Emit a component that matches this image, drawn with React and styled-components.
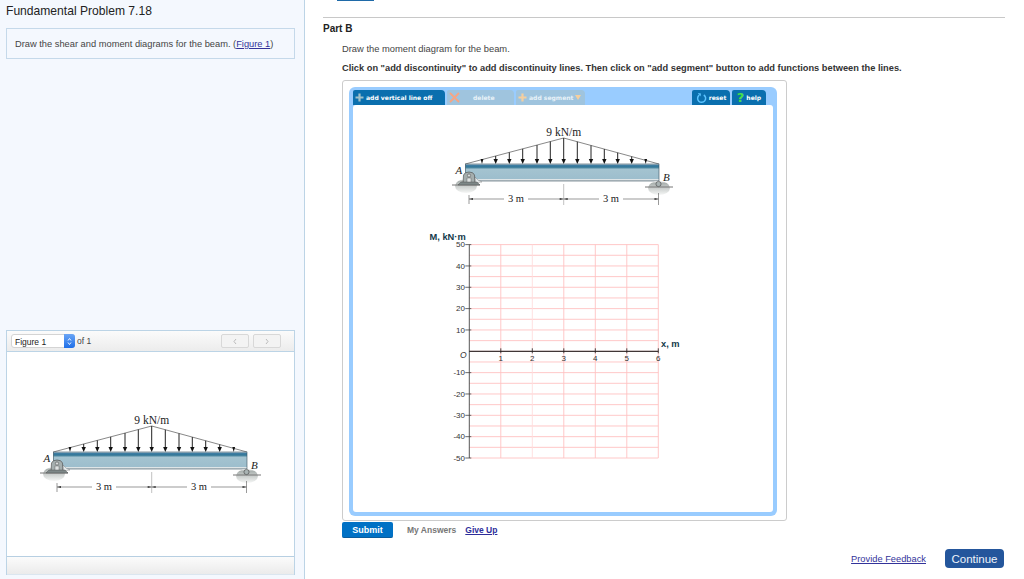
import React from 'react';
import styled, { createGlobalStyle } from 'styled-components';

const GlobalStyle = createGlobalStyle`
  html, body {
    margin: 0;
    padding: 0;
    background: #fff;
  }
  body {
    font-family: "Liberation Sans", Arial, sans-serif;
    color: #333;
  }
`;

const Page = styled.div`
  display: flex;
  width: 1024px;
  height: 579px;
  overflow: hidden;
`;

const Sidebar = styled.aside`
  display: flex;
  flex-direction: column;
  box-sizing: border-box;
  width: 305px;
  padding: 0 9px 4px 6px;
  background: #f4f8fe;
  border-right: 1px solid #bcd4e6;
`;

const Title = styled.h1`
  margin: 4px 0 0;
  font-size: 12.1px;
  line-height: 14px;
  font-weight: normal;
  color: #222;
`;

const ProblemBox = styled.div`
  box-sizing: border-box;
  height: 31px;
  margin-top: 10px;
  padding: 9px 8px 0;
  border: 1px solid #c5d9ea;
  font-size: 9.3px;
  line-height: 12px;
  color: #444;
`;

const TextLink = styled.a`
  color: #33339a;
  text-decoration: underline;
`;

const FigurePanel = styled.section`
  display: flex;
  flex-direction: column;
  height: 244px;
  margin-top: auto;
  border: 1px solid #bcd4e6;
  border-width: 1px 1px 0;
  background: #fff;
`;

const FigureBar = styled.div`
  display: flex;
  align-items: center;
  box-sizing: border-box;
  height: 21px;
  padding: 0 13px 0 4px;
  background: linear-gradient(#fbfbfb, #ececec);
  border-bottom: 1px solid #bcd4e6;
  font-size: 8.5px;
`;

const FigureSelect = styled.div`
  display: flex;
  justify-content: space-between;
  box-sizing: border-box;
  width: 64px;
  height: 14px;
  padding-left: 3px;
  background: #fff;
  border: 1px solid #d4d4d4;
  border-radius: 3px;
  font-size: 8.5px;
  line-height: 14px;
  color: #222;
`;

const SelectArrows = styled.span`
  display: flex;
  align-items: center;
  justify-content: center;
  width: 11px;
  margin: -1px -1px -1px 0;
  background: linear-gradient(#6aa5f5, #1f6fe8);
  border-radius: 0 3px 3px 0;
`;

const OfLabel = styled.span`
  margin-left: 2px;
  flex: 1;
  color: #444;
`;

const PageButton = styled.button`
  display: flex;
  align-items: center;
  justify-content: center;
  box-sizing: border-box;
  width: 28px;
  height: 14px;
  margin-left: ${(p) => (p.$next ? '4px' : '0')};
  padding: 0;
  background: #f3f3f3;
  border: 1px solid #d8d8d8;
  border-radius: 2px;
`;

const FigureBody = styled.div`
  flex: 1;
  display: flex;
  justify-content: center;
  padding-top: 51px;
  background: #fff;
`;

const FigureFooter = styled.div`
  box-sizing: border-box;
  height: 19px;
  background: linear-gradient(#fbfbfb, #ebebeb);
  border-top: 1px solid #b7cfe2;
  border-bottom: 1px solid #dbe6ef;
`;

const Main = styled.main`
  display: flex;
  flex-direction: column;
  flex: 1;
  padding: 0 19px 11px 18px;
`;

const TopStub = styled.div`
  width: 37px;
  height: 1px;
  margin-left: 14px;
  background: #1f6aa8;
`;

const Rule = styled.hr`
  width: 100%;
  height: 1px;
  margin: 16px 0 0;
  border: 0;
  background: #c8c8c8;
`;

const PartTitle = styled.h2`
  margin: 5px 0 0;
  font-size: 10px;
  line-height: 12px;
  font-weight: bold;
  color: #222;
`;

const Question = styled.div`
  margin-left: 19px;
`;

const Prompt = styled.p`
  margin: 8px 0 0;
  font-size: 9.35px;
  line-height: 12px;
  color: #444;
`;

const Instruction = styled.p`
  margin: 7px 0 0;
  font-size: 9.27px;
  line-height: 12px;
  font-weight: bold;
  color: #333;
`;

const Widget = styled.div`
  box-sizing: border-box;
  width: 445px;
  height: 441px;
  margin-top: 6px;
  padding: 6px 9px 4px 6px;
  border: 1px solid #ccc;
  border-radius: 3px;
`;

const Frame = styled.div`
  display: flex;
  flex-direction: column;
  height: 100%;
  box-sizing: border-box;
  padding: 0 4px 4px;
  background: #99ccff;
  border-radius: 6px;
`;

const Toolbar = styled.div`
  display: flex;
  align-items: flex-end;
  gap: 2px;
  height: 18px;
  padding-right: 7px;
`;

const ToolButton = styled.button`
  display: flex;
  align-items: center;
  justify-content: ${(p) => p.$justify || 'flex-start'};
  gap: 2px;
  box-sizing: border-box;
  width: ${(p) => p.$width}px;
  height: 15px;
  padding: 0 2px;
  margin-left: ${(p) => (p.$push ? 'auto' : '0')};
  border: 0;
  border-radius: 2px 4px 0 0;
  background: ${(p) => (p.$off ? '#9fc4de' : '#0a6fae')};
  color: ${(p) => (p.$off ? '#e8f2f8' : '#fff')};
  font-family: "DejaVu Sans", Verdana, sans-serif;
  font-size: 6.05px;
  font-weight: bold;
  white-space: nowrap;
`;

const DeleteLabel = styled.span`
  margin-left: 11px;
`;

const HelpMark = styled.span`
  color: #45e04a;
  font-size: 13px;
  line-height: 10px;
`;

const Canvas = styled.div`
  flex: 1;
  display: flex;
  flex-direction: column;
  align-items: center;
  gap: 10px;
  padding-top: 10px;
  background: #fff;
  border-radius: 3px;
`;

const Actions = styled.div`
  display: flex;
  align-items: center;
  height: 16px;
  margin-top: 1px;
`;

const SubmitButton = styled.button`
  box-sizing: border-box;
  width: 51px;
  height: 16px;
  padding: 0;
  background: #0071c5;
  border: 0;
  border-bottom: 1px solid #0a5c9c;
  border-radius: 2px;
  color: #fff;
  font-family: inherit;
  font-size: 9px;
  font-weight: bold;
`;

const MyAnswers = styled.span`
  margin-left: 14px;
  font-size: 8.5px;
  font-weight: bold;
  color: #777;
`;

const GiveUp = styled.a`
  margin-left: 9px;
  font-size: 8.5px;
  font-weight: bold;
  color: #2d2d9a;
  text-decoration: underline;
`;

const Footer = styled.div`
  display: flex;
  align-items: center;
  justify-content: flex-end;
  gap: 19px;
  margin-top: auto;
  margin-right: 1px;
`;

const Feedback = styled.a`
  font-size: 9.3px;
  color: #33339a;
  text-decoration: underline;
`;

const ContinueButton = styled.button`
  box-sizing: border-box;
  width: 59px;
  height: 19px;
  padding: 0;
  background: #24569c;
  border: 0;
  border-radius: 4px;
  color: #eef3fa;
  font-family: inherit;
  font-size: 11.5px;
`;

const BeamGraphic = styled.svg`
  display: block;
  flex: none;
`;

const arrowXs = [62, 75.7, 89.3, 102.7, 117, 130.3, 143.7, 157.3, 171, 184.3, 197.7, 211.7, 225.7];
const apexX = 143.7;
const apexY = 23;
const beamLeft = 45.3;
const beamRight = 239;
const beamTop = 49;

const loadTop = (x) => {
  const edge = x < apexX ? beamLeft : beamRight;
  const t = (x - edge) / (apexX - edge);
  return beamTop + (apexY - beamTop) * t;
};

const Ground = ({ x, y, width, id }) => (
  <g>
    <ellipse cx={x} cy={y + 1} rx={width / 2 - 3} ry={7} fill={`url(#${id}-ground)`} />
    <line x1={x - width / 2} x2={x + width / 2} y1={y} y2={y} stroke="#777" strokeWidth="1" />
  </g>
);

const BeamFigure = ({ id }) => (
  <BeamGraphic width="286" height="100" viewBox="0 0 286 100">
    <defs>
      <linearGradient id={`${id}-body`} x1="0" x2="0" y1="0" y2="1">
        <stop offset="0" stopColor="#cfdee6" />
        <stop offset="0.1" stopColor="#2a7099" />
        <stop offset="0.22" stopColor="#48859f" />
        <stop offset="0.3" stopColor="#a4c3d0" />
        <stop offset="0.86" stopColor="#9dbecd" />
        <stop offset="0.9" stopColor="#e2e8ea" />
        <stop offset="1" stopColor="#c4cdd1" />
      </linearGradient>
      <linearGradient id={`${id}-ground`} x1="0" x2="0" y1="0" y2="1">
        <stop offset="0" stopColor="#ffffff" />
        <stop offset="0.15" stopColor="#aab1af" />
        <stop offset="1" stopColor="#f6f7f6" />
      </linearGradient>
    </defs>

    <polyline
      points={`${beamLeft},${beamTop} ${apexX},${apexY} ${beamRight},${beamTop}`}
      fill="none"
      stroke="#555"
      strokeWidth="0.7"
    />
    {arrowXs.map((x) => {
      const top = loadTop(x);
      const head = x < 65 || x > 222 ? 1.4 : 2.2;
      return (
        <g key={x}>
          <line x1={x} x2={x} y1={top} y2={beamTop - 3} stroke="#222" strokeWidth="1" />
          <polygon points={`${x - head},${beamTop - 5} ${x + head},${beamTop - 5} ${x},${beamTop}`} fill="#111" />
        </g>
      );
    })}
    <text x={apexX} y="21" textAnchor="middle" fontFamily="Liberation Serif, serif" fontSize="11.5" fill="#222">
      9 kN/m
    </text>

    <rect x={beamLeft} y={beamTop} width={beamRight - beamLeft} height="17" fill={`url(#${id}-body)`} stroke="#39525f" strokeWidth="0.6" />

    <Ground x={46} y={70} width={28} id={id} />
    <path d="M55 62 Q58 66 62 67 L55 68 Z" fill="#e4e9ea" stroke="#555" strokeWidth="0.3" />
    <path d="M43 69 L43.5 60 Q44.5 57 49 57 Q53.5 57 54.5 60 L55 69 Z" fill="#a5aeae" stroke="#444" strokeWidth="0.6" />
    <circle cx="49" cy="60.5" r="1.6" fill="#d8dcdc" stroke="#444" strokeWidth="0.5" />
    <rect x="47" y="63" width="4" height="6" fill="#dfe3e3" stroke="#555" strokeWidth="0.4" />
    <path d="M38 70 L41 67 L57 67 L60 70 Z" fill="#7d8787" stroke="#444" strokeWidth="0.4" />

    <Ground x={239} y={72} width={28} id={id} />
    <circle cx="238.5" cy="69" r="2.6" fill="#a9b3b3" stroke="#444" strokeWidth="0.6" />

    <text x="35.5" y="59" fontFamily="Liberation Serif, serif" fontStyle="italic" fontSize="11" fill="#222">A</text>
    <text x="243" y="66" fontFamily="Liberation Serif, serif" fontStyle="italic" fontSize="11" fill="#222">B</text>

    <line x1="49" x2="238.5" y1="84" y2="84" stroke="#555" strokeWidth="0.6" />
    <line x1="49" x2="49" y1="80" y2="89" stroke="#555" strokeWidth="0.6" />
    <line x1="143.7" x2="143.7" y1="69" y2="90" stroke="#999" strokeWidth="0.6" />
    <line x1="238.5" x2="238.5" y1="78" y2="90" stroke="#555" strokeWidth="0.6" />
    <polygon points="49,84 53,83 53,85" fill="#333" />
    <polygon points="143.7,84 139.7,83 139.7,85" fill="#333" />
    <polygon points="143.7,84 147.7,83 147.7,85" fill="#333" />
    <polygon points="238.5,84 234.5,83 234.5,85" fill="#333" />
    <rect x="84" y="78" width="24" height="11" fill="#fff" />
    <rect x="179" y="78" width="24" height="11" fill="#fff" />
    <text x="96" y="87" textAnchor="middle" fontFamily="Liberation Serif, serif" fontSize="10.5" fill="#222">3 m</text>
    <text x="191" y="87" textAnchor="middle" fontFamily="Liberation Serif, serif" fontSize="10.5" fill="#222">3 m</text>
  </BeamGraphic>
);

const axisX = 49.3;
const axisY = 126.3;
const unitX = 31.5;
const unitY = 2.134;
const hLines = Array.from({ length: 21 }, (_, i) => -50 + i * 5);
const yLabels = [50, 40, 30, 20, 10, -10, -20, -30, -40, -50];
const xLabels = [1, 2, 3, 4, 5, 6];

const MomentGraph = () => (
  <BeamGraphic width="286" height="240" viewBox="0 0 286 240">
    {hLines.map((v) => (
      <line
        key={v}
        x1={axisX}
        x2={axisX + unitX * 6}
        y1={axisY - v * unitY}
        y2={axisY - v * unitY}
        stroke="#ffc2c2"
        strokeWidth="0.9"
      />
    ))}
    {xLabels.map((v) => (
      <line
        key={v}
        x1={axisX + v * unitX}
        x2={axisX + v * unitX}
        y1={axisY - 50 * unitY}
        y2={axisY + 50 * unitY}
        stroke={v === 2 ? '#ffdcdc' : '#ffc2c2'}
        strokeWidth="0.9"
      />
    ))}
    <line x1={axisX} x2={axisX} y1={axisY - 50 * unitY} y2={axisY + 50 * unitY} stroke="#444" strokeWidth="0.9" />
    <line x1={axisX} x2={axisX + unitX * 6} y1={axisY} y2={axisY} stroke="#111" strokeWidth="1" />
    {yLabels.map((v) => (
      <g key={v}>
        <line x1={axisX - 4} x2={axisX + 2} y1={axisY - v * unitY} y2={axisY - v * unitY} stroke="#444" strokeWidth="0.8" />
        <text
          x="45"
          y={axisY - v * unitY + 2.8}
          textAnchor="end"
          fontFamily="Liberation Sans, sans-serif"
          fontSize="8"
          fill="#333"
        >
          {v}
        </text>
      </g>
    ))}
    {xLabels.map((v) => (
      <g key={v}>
        <line x1={axisX + v * unitX} x2={axisX + v * unitX} y1={axisY - 3} y2={axisY + 2} stroke="#222" strokeWidth="0.8" />
        <text
          x={axisX + v * unitX}
          y={axisY + 9.5}
          textAnchor="middle"
          fontFamily="Liberation Sans, sans-serif"
          fontSize="8"
          fill="#333"
        >
          {v}
        </text>
      </g>
    ))}
    <text x="40" y="133" fontFamily="Liberation Sans, sans-serif" fontStyle="italic" fontSize="8.5" fill="#333">O</text>
    <text x="9.5" y="15" fontFamily="Liberation Sans, sans-serif" fontWeight="bold" fontSize="9.3" fill="#12394a">M, kN·m</text>
    <text x="241" y="122" fontFamily="Liberation Sans, sans-serif" fontWeight="bold" fontSize="9.3" fill="#12394a">x, m</text>
  </BeamGraphic>
);

const PlusIcon = ({ color }) => (
  <svg width="9" height="9" viewBox="0 0 9 9">
    <path d="M4.5 0.5v8M0.5 4.5h8" stroke={color} strokeWidth="2.2" />
  </svg>
);

const CrossIcon = () => (
  <svg width="11" height="11" viewBox="0 0 11 11">
    <path d="M1 1l9 9M10 1l-9 9" stroke="#f7a583" strokeWidth="1.8" />
  </svg>
);

const ResetIcon = () => (
  <svg width="11" height="12" viewBox="0 0 11 12">
    <path d="M3.2 3.2A4 4 0 1 0 7.8 3" fill="none" stroke="#5cc4ff" strokeWidth="1.5" />
    <path d="M1.8 1l3.2 0.4-0.5 3.2z" fill="#5cc4ff" />
  </svg>
);

const Chevron = ({ next }) => (
  <svg width="6" height="7" viewBox="0 0 6 7">
    <path d={next ? 'M2 1l2 2.5-2 2.5' : 'M4 1L2 3.5 4 6'} fill="none" stroke="#bbb" strokeWidth="1" />
  </svg>
);

const App = () => (
  <Page>
    <GlobalStyle />
    <Sidebar>
      <Title>Fundamental Problem 7.18</Title>
      <ProblemBox>
        Draw the shear and moment diagrams for the beam. (<TextLink href="#figure">Figure 1</TextLink>)
      </ProblemBox>
      <FigurePanel>
        <FigureBar>
          <FigureSelect>
            Figure 1
            <SelectArrows>
              <svg width="5" height="9" viewBox="0 0 5 9">
                <path d="M1 3.5l1.5-2 1.5 2M1 5.5l1.5 2 1.5-2" fill="none" stroke="#fff" strokeWidth="0.9" />
              </svg>
            </SelectArrows>
          </FigureSelect>
          <OfLabel>of 1</OfLabel>
          <PageButton aria-label="Previous figure">
            <Chevron />
          </PageButton>
          <PageButton $next aria-label="Next figure">
            <Chevron next />
          </PageButton>
        </FigureBar>
        <FigureBody>
          <BeamFigure id="side" />
        </FigureBody>
        <FigureFooter />
      </FigurePanel>
    </Sidebar>

    <Main>
      <TopStub />
      <Rule />
      <PartTitle>Part B</PartTitle>
      <Question>
        <Prompt>Draw the moment diagram for the beam.</Prompt>
        <Instruction>
          Click on "add discontinuity" to add discontinuity lines. Then click on "add segment" button to add functions between the lines.
        </Instruction>
        <Widget>
          <Frame>
            <Toolbar>
              <ToolButton $width={92}>
                <PlusIcon color="#9fc0c8" />
                add vertical line off
              </ToolButton>
              <ToolButton $off $width={67}>
                <CrossIcon />
                <DeleteLabel>delete</DeleteLabel>
              </ToolButton>
              <ToolButton $off $width={69}>
                <PlusIcon color="#f5cf9f" />
                add segment
                <svg width="6" height="5" viewBox="0 0 6 5">
                  <path d="M0 0h6L3 5z" fill="#f5cf9f" />
                </svg>
              </ToolButton>
              <ToolButton $push $width={38} $justify="center">
                <ResetIcon />
                reset
              </ToolButton>
              <ToolButton $width={34} $justify="center">
                <HelpMark>?</HelpMark>
                help
              </ToolButton>
            </Toolbar>
            <Canvas>
              <BeamFigure id="part" />
              <MomentGraph />
            </Canvas>
          </Frame>
        </Widget>
        <Actions>
          <SubmitButton>Submit</SubmitButton>
          <MyAnswers>My Answers</MyAnswers>
          <GiveUp href="#give-up">Give Up</GiveUp>
        </Actions>
      </Question>
      <Footer>
        <Feedback href="#feedback">Provide Feedback</Feedback>
        <ContinueButton>Continue</ContinueButton>
      </Footer>
    </Main>
  </Page>
);

export default App;
